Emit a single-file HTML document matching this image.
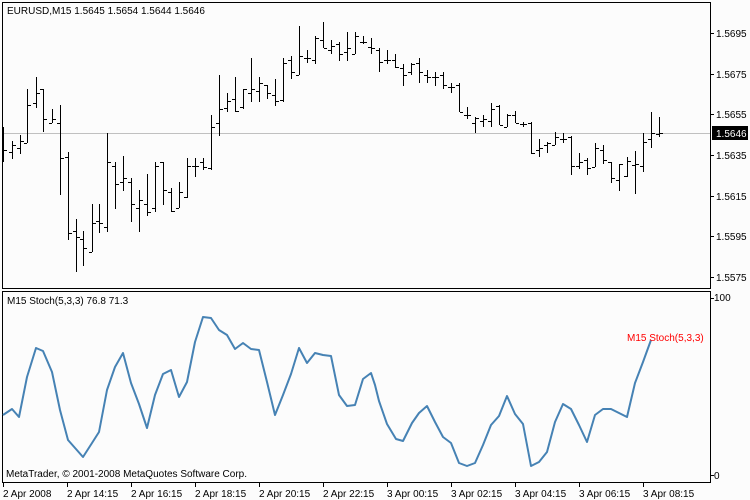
<!DOCTYPE html>
<html><head><meta charset="utf-8"><style>
html,body{margin:0;padding:0;background:#fcfcfc;}
svg{display:block;}
text{font-family:"Liberation Sans","DejaVu Sans",sans-serif;font-size:10px;}
</style></head><body>
<svg width="750" height="500" viewBox="0 0 750 500" xmlns="http://www.w3.org/2000/svg">
<rect width="750" height="500" fill="#fcfcfc"/>
<!-- grid current price line -->
<line x1="3" y1="133.5" x2="710" y2="133.5" stroke="#c0c0c0" stroke-width="1"/>
<!-- bars -->
<path fill="none" stroke="#000" stroke-width="1" shape-rendering="crispEdges" d="
M3.5 127V162M2.5 127V162M4 150.5h3
M12.5 141V159M9 152.5h3M13 145.5h3
M20.5 135V154M17 148.5h3M21 141.5h3
M27.5 89V143M24 143.5h3M28 105.5h3
M36.5 77V108M33 103.5h3M37 93.5h3
M43.5 89V132M40 89.5h3M44 119.5h3
M52.5 109V123M49 123.5h3M53 119.5h3
M60.5 105V195M57 123.5h3M61 158.5h3
M68.5 152V240M65 157.5h3M69 233.5h3
M76.5 219V272M73 231.5h3M77 237.5h3
M83.5 231V266M80 239.5h3M84 248.5h3
M92.5 204V252M89 252.5h3M93 223.5h3
M99.5 204V233M96 221.5h3M100 223.5h3
M107.5 133V232M104 227.5h3M108 162.5h3
M115.5 162V209M112 166.5h3M116 184.5h3
M123.5 156V191M120 182.5h3M124 178.5h3
M131.5 178V222M128 182.5h3M132 204.5h3
M139.5 190V232M136 208.5h3M140 200.5h3
M147.5 174V216M144 204.5h3M148 212.5h3
M155.5 162V212M152 208.5h3M156 166.5h3
M163.5 162V205M160 162.5h3M164 190.5h3
M171.5 188V212M168 192.5h3M172 211.5h3
M179.5 182V208M176 208.5h3M180 192.5h3
M187.5 158V198M184 197.5h3M188 166.5h3
M195.5 158V177M192 166.5h3M196 166.5h3
M203.5 158V170M200 162.5h3M204 167.5h3
M211.5 115V170M208 168.5h3M212 127.5h3
M219.5 75V136M216 123.5h3M220 109.5h3
M227.5 93V112M224 108.5h3M228 101.5h3
M235.5 77V112M232 99.5h3M236 111.5h3
M243.5 89V109M240 107.5h3M244 89.5h3
M251.5 58V102M248 93.5h3M252 89.5h3
M259.5 77V102M256 91.5h3M260 83.5h3
M267.5 85V99M264 85.5h3M268 93.5h3
M275.5 79V106M272 95.5h3M276 101.5h3
M283.5 58V102M280 100.5h3M284 63.5h3
M291.5 56V79M288 60.5h3M292 72.5h3
M299.5 26V75M296 75.5h3M300 56.5h3
M307.5 50V63M304 58.5h3M308 58.5h3
M315.5 36V64M312 60.5h3M316 38.5h3
M323.5 22V48M320 40.5h3M324 48.5h3
M331.5 40V54M328 50.5h3M332 46.5h3
M339.5 42V61M336 44.5h3M340 54.5h3
M347.5 32V61M344 52.5h3M348 48.5h3
M355.5 32V54M352 54.5h3M356 36.5h3
M363.5 36V44M360 42.5h3M364 42.5h3
M371.5 38V54M368 47.5h3M372 48.5h3
M379.5 48V72M376 50.5h3M380 62.5h3
M387.5 50V64M384 60.5h3M388 60.5h3
M395.5 54V68M392 60.5h3M396 67.5h3
M403.5 64V86M400 68.5h3M404 75.5h3
M411.5 63V75M408 72.5h3M412 64.5h3
M419.5 58V83M416 63.5h3M420 72.5h3
M427.5 70V83M424 75.5h3M428 77.5h3
M435.5 72V86M432 77.5h3M436 77.5h3
M443.5 72V89M440 75.5h3M444 85.5h3
M451.5 83V93M448 87.5h3M452 87.5h3
M459.5 83V112M456 85.5h3M460 112.5h3
M467.5 107V119M464 115.5h3M468 115.5h3
M475.5 117V133M472 123.5h3M476 118.5h3
M483.5 115V127M480 121.5h3M484 119.5h3
M491.5 103V127M488 121.5h3M492 109.5h3
M499.5 105V125M496 106.5h3M500 125.5h3
M507.5 114V127M504 127.5h3M508 115.5h3
M515.5 111V123M512 115.5h3M516 123.5h3
M523.5 122V127M520 124.5h3M524 124.5h3
M531.5 122V154M528 123.5h3M532 153.5h3
M539.5 139V157M536 150.5h3M540 148.5h3
M547.5 142V153M544 145.5h3M548 143.5h3
M555.5 132V145M552 145.5h3M556 137.5h3
M563.5 133V143M560 139.5h3M564 139.5h3
M571.5 136V175M568 137.5h3M572 166.5h3
M579.5 153V169M576 166.5h3M580 162.5h3
M587.5 158V175M584 160.5h3M588 168.5h3
M595.5 143V167M592 167.5h3M596 148.5h3
M603.5 145V164M600 150.5h3M604 160.5h3
M611.5 162V183M608 162.5h3M612 178.5h3
M619.5 164V191M616 180.5h3M620 164.5h3
M627.5 157V177M624 176.5h3M628 161.5h3
M635.5 151V194M632 165.5h3M636 164.5h3
M643.5 133V172M640 166.5h3M644 142.5h3
M651.5 112V148M648 139.5h3M652 133.5h3
M659.5 117V137M656 134.5h3M660 133.5h3
"/>
<!-- panel borders -->
<rect x="2.5" y="2.5" width="708" height="286" fill="none" stroke="#000" stroke-width="1"/>
<rect x="2.5" y="291.5" width="708" height="191" fill="none" stroke="#000" stroke-width="1"/>
<!-- price axis ticks -->
<path stroke="#000" stroke-width="1" d="M710 33.5h4M710 74.5h4M710 114.5h4M710 155.5h4M710 196.5h4M710 236.5h4M710 277.5h4M710 298.5h4M710 475.5h4"/>
<g fill="#000">
<text x="716" y="37">1.5695</text>
<text x="716" y="78">1.5675</text>
<text x="716" y="118">1.5655</text>
<text x="716" y="159">1.5635</text>
<text x="716" y="200">1.5615</text>
<text x="716" y="240">1.5595</text>
<text x="716" y="281">1.5575</text>
<text x="714" y="301">100</text>
<text x="714" y="479">0</text>
</g>
<rect x="712" y="126" width="36" height="14" fill="#000"/>
<text x="716" y="137" fill="#fff">1.5646</text>
<text x="7" y="14" fill="#000">EURUSD,M15  1.5645 1.5654 1.5644 1.5646</text>
<text x="7" y="304" fill="#000">M15 Stoch(5,3,3) 76.8 71.3</text>
<text x="6" y="477" fill="#000">MetaTrader, © 2001-2008 MetaQuotes Software Corp.</text>
<!-- stochastic -->
<polyline fill="none" stroke="#4682b4" stroke-width="2" stroke-linejoin="round" points="3,415 12,409 19,417 27,377 36,348 43,351 52,372 60,410 68,440 83,457 92,443 99,432 107,390 115,367 123,353 131,383 139,404 147,428 155,395 163,374 171,370 179,397 187,382 195,342 203,317 211,318 219,330 227,335 235,349 243,343 251,349 259,350 267,382 275,415 283,395 291,374 299,348 307,363 315,353 323,355 331,356 339,395 347,406 355,405 363,379 371,373 375,385 379,401 387,424 396,439 403,441 412,423 419,413 427,406 435,422 443,437 451,443 459,463 467,466 475,463 483,445 491,425 499,416 507,396 515,414 523,424 531,466 539,462 547,452 555,422 563,404 571,409 579,425 587,442 595,415 603,409 611,409 619,413 627,417 635,383 643,362 651,340"/>
<text x="627" y="341" fill="#ff0000">M15 Stoch(5,3,3)</text>
<!-- time axis -->
<path stroke="#000" stroke-width="1" d="M3.5 482v5M67.5 482v5M131.5 482v5M195.5 482v5M259.5 482v5M323.5 482v5M387.5 482v5M451.5 482v5M515.5 482v5M579.5 482v5M643.5 482v5"/>
<g fill="#000">
<text x="3" y="497">2 Apr 2008</text>
<text x="67" y="497">2 Apr 14:15</text>
<text x="131" y="497">2 Apr 16:15</text>
<text x="195" y="497">2 Apr 18:15</text>
<text x="259" y="497">2 Apr 20:15</text>
<text x="323" y="497">2 Apr 22:15</text>
<text x="387" y="497">3 Apr 00:15</text>
<text x="451" y="497">3 Apr 02:15</text>
<text x="515" y="497">3 Apr 04:15</text>
<text x="579" y="497">3 Apr 06:15</text>
<text x="643" y="497">3 Apr 08:15</text>
</g>
</svg>
</body></html>
